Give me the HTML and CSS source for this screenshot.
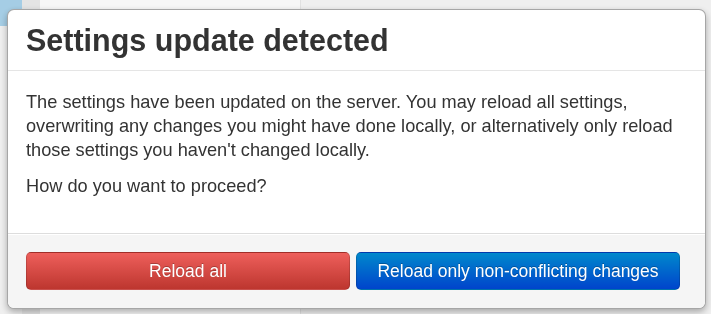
FILE: index.html
```html
<!DOCTYPE html>
<html lang="en">
  <head>
    <meta charset="UTF-8" />
    <meta name="viewport" content="width=device-width, initial-scale=1.0" />
    <title>Settings update detected</title>
    <link rel="stylesheet" href="styles.css">
  </head>
  <body>
    <div id="page">
      <div class="side">
        <div class="side-tab"></div>
      </div>
      <div class="gutter"></div>
      <div class="pane"></div>
      <div class="pane pane-alt"></div>
    </div>
    <div id="backdrop"></div>
    <div class="modal">
      <div class="modal-header">
        <h3>Settings update detected</h3>
      </div>
      <div class="modal-body">
        <p>The settings have been updated on the server. You may reload all settings, overwriting any changes you might have done locally, or alternatively only reload those settings you haven't changed locally.</p>
        <p>How do you want to proceed?</p>
      </div>
      <div class="modal-footer">
        <button class="btn btn-danger">Reload all</button>
        <button class="btn btn-primary">Reload only non-conflicting changes</button>
      </div>
    </div>
  </body>
</html>
```

FILE: styles.css
```css
html, body {
  margin: 0;
  height: 100%;
}
body {
  font-family: "Liberation Sans", Arial, sans-serif;
  color: #333;
  overflow: hidden;
}
#page {
  display: flex;
  height: 100%;
}
.side {
  width: 22px;
  background: #f4f4f4;
}
.side-tab {
  height: 26px;
  background: #a9d2ea;
}
.gutter {
  width: 18px;
  background: #e9e9e9;
}
.pane {
  width: 260px;
  background: #fcfcfc;
}
.pane-alt {
  flex: 1;
  background: #f4f4f4;
  border-left: 1px solid #e6e6e6;
}
#backdrop {
  position: fixed;
  inset: 0;
  background: rgba(0, 0, 0, 0.02);
}
.modal {
  position: fixed;
  left: 7px;
  top: 9px;
  width: 697px;
  background: #fff;
  border: 1px solid rgba(0, 0, 0, 0.35);
  border-radius: 7px;
  box-shadow: 0 3px 7px rgba(0, 0, 0, 0.3);
  overflow: hidden;
}
.modal-header {
  padding: 12px 18px;
  border-bottom: 1px solid #e5e5e5;
}
.modal-header h3 {
  margin: 0;
  font-size: 30.5px;
  line-height: 36px;
  font-weight: bold;
}
.modal-body {
  padding: 19px 10px 35px 18px;
  font-size: 18.2px;
  line-height: 24px;
}
.modal-body p {
  margin: 0 0 12px;
}
.modal-body p:last-child {
  margin-bottom: 0;
}
.modal-footer {
  display: flex;
  gap: 6px;
  padding: 18px 25px 18px 18px;
  background: #f5f5f5;
  border-top: 1px solid #ddd;
  box-shadow: inset 0 1px 0 #fff;
}
.btn {
  flex: 1;
  height: 38px;
  font-family: inherit;
  font-size: 17.5px;
  color: #fff;
  border-radius: 5px;
  border: 1px solid rgba(0, 0, 0, 0.15);
  text-shadow: 0 -1px 0 rgba(0, 0, 0, 0.25);
}
.btn-danger {
  background: linear-gradient(#ee5f5b, #bd362f);
}
.btn-primary {
  background: linear-gradient(#0088cc, #0044cc);
}
```
